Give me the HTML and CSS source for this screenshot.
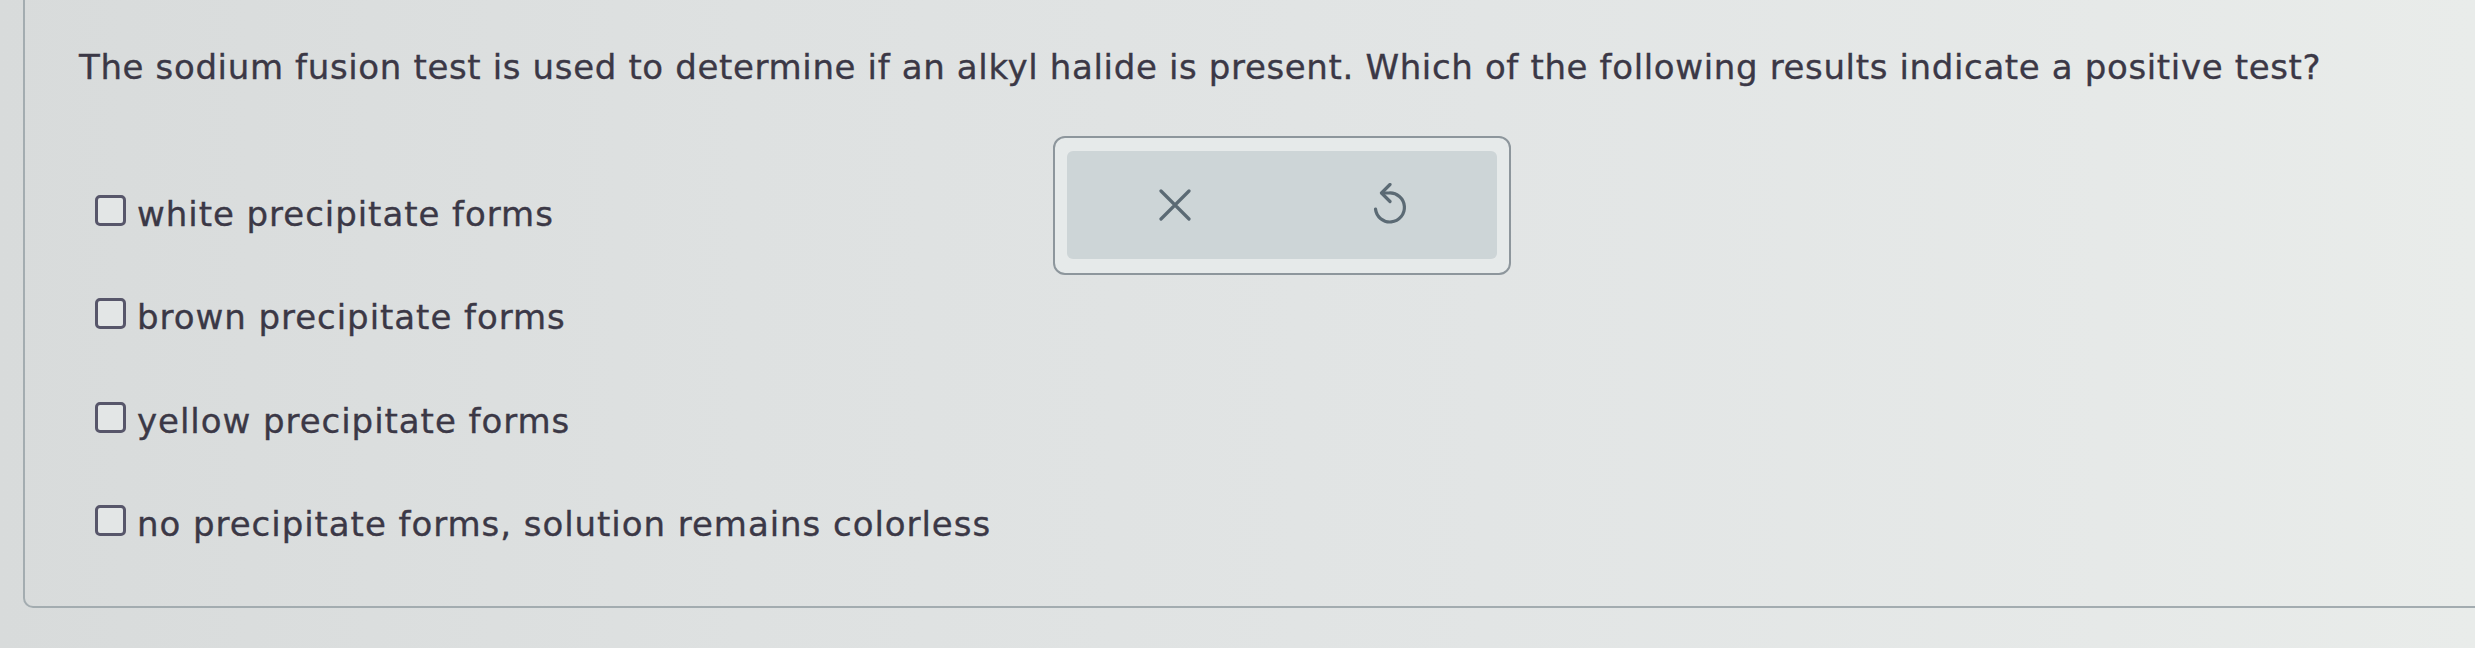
FILE: index.html
```html
<!DOCTYPE html>
<html lang="en">
<head>
<meta charset="utf-8">
<title>Sodium fusion test</title>
<link rel="stylesheet" href="styles.css">
</head>
<body>
<div class="page">
  <div class="card">
    <p class="question">The sodium fusion test is used to determine if an alkyl halide is present. Which of the following results indicate a positive test?</p>
    <div class="answer-area">
      <div class="options">
        <label class="option"><span class="box"></span><span class="label">white precipitate forms</span></label>
        <label class="option"><span class="box"></span><span class="label">brown precipitate forms</span></label>
        <label class="option"><span class="box"></span><span class="label">yellow precipitate forms</span></label>
        <label class="option"><span class="box"></span><span class="label">no precipitate forms, solution remains colorless</span></label>
      </div>
      <div class="toolbar">
        <div class="toolbar-inner">
          <button class="tool" aria-label="Clear">
            <svg width="32" height="32" viewBox="0 0 32 32"><path d="M2 2 L30 30 M30 2 L2 30" stroke="#5b6a74" stroke-width="3.2" stroke-linecap="round" fill="none"/></svg>
          </button>
          <button class="tool" aria-label="Undo">
            <svg width="40" height="44" viewBox="0 0 40 44"><path d="M12 10 H19 A14.5 14.5 0 1 1 5.5 26" stroke="#5b6a74" stroke-width="3.2" stroke-linecap="round" fill="none"/><path d="M20 1.5 L11.5 10 L20 18.5" stroke="#5b6a74" stroke-width="3.2" stroke-linecap="round" stroke-linejoin="round" fill="none"/></svg>
          </button>
        </div>
      </div>
    </div>
  </div>
</div>
</body>
</html>
```

FILE: styles.css
```css
html, body {
  margin: 0;
  padding: 0;
}
body {
  width: 2475px;
  height: 648px;
  overflow: hidden;
  background: linear-gradient(90deg, #d8dbdb 0%, #dee1e1 30%, #e2e5e5 60%, #e6e9e8 85%, #e9ecea 100%);
  font-family: "DejaVu Sans", Verdana, sans-serif;
  color: #3b3846;
  -webkit-text-stroke: 0.35px #3b3846;
}
.page {
  padding-left: 23px;
}
.card {
  height: 608px;
  box-sizing: border-box;
  border-left: 2px solid #a3acb0;
  border-bottom: 2px solid #a3acb0;
  border-bottom-left-radius: 10px;
  padding: 47px 0 0 54px;
}
.question {
  margin: 0;
  font-size: 34px;
  line-height: 40px;
  letter-spacing: 0.64px;
  white-space: nowrap;
}
.answer-area {
  display: flex;
  align-items: flex-start;
  margin-top: 49px;
}
.options {
  flex: 0 0 974px;
  display: flex;
  flex-direction: column;
  gap: 63.3px;
  padding: 58px 0 0 16px;
  box-sizing: border-box;
}
.option {
  display: flex;
  align-items: baseline;
  font-size: 34px;
  line-height: 40px;
  letter-spacing: 0.95px;
  white-space: nowrap;
}
.box {
  display: inline-block;
  width: 31px;
  height: 31px;
  box-sizing: border-box;
  border: 3px solid #57566a;
  border-radius: 5px;
  background: #e3e6e6;
  margin-right: 11px;
  -webkit-text-stroke: 0;
}
.toolbar {
  width: 458px;
  height: 139px;
  box-sizing: border-box;
  border: 2px solid #8d969c;
  border-radius: 12px;
  background: #e6eaea;
  padding: 13px 12px;
}
.toolbar-inner {
  height: 108px;
  background: #cdd5d7;
  border-radius: 6px;
  display: flex;
}
.tool {
  flex: 1;
  border: 0;
  background: transparent;
  padding: 0;
  display: flex;
  align-items: center;
  justify-content: center;
}
.tool svg {
  display: block;
}
```
